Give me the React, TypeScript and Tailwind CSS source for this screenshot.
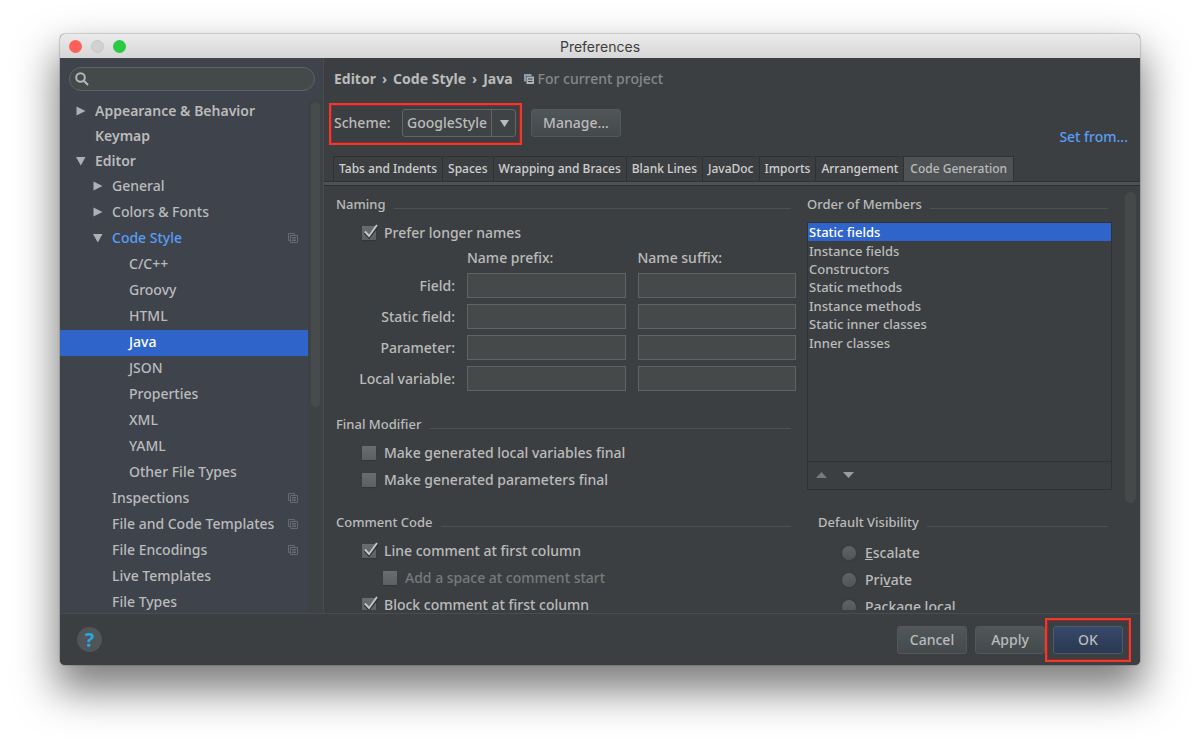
import React from 'react';

type TreeItem = {
  label: string;
  level: 0 | 1 | 2;
  arrow?: 'open' | 'closed';
  project?: boolean;
  link?: boolean;
  selected?: boolean;
};

const tree: TreeItem[] = [
  { label: 'Appearance & Behavior', level: 0, arrow: 'closed' },
  { label: 'Keymap', level: 0 },
  { label: 'Editor', level: 0, arrow: 'open' },
  { label: 'General', level: 1, arrow: 'closed' },
  { label: 'Colors & Fonts', level: 1, arrow: 'closed' },
  { label: 'Code Style', level: 1, arrow: 'open', project: true, link: true },
  { label: 'C/C++', level: 2 },
  { label: 'Groovy', level: 2 },
  { label: 'HTML', level: 2 },
  { label: 'Java', level: 2, selected: true },
  { label: 'JSON', level: 2 },
  { label: 'Properties', level: 2 },
  { label: 'XML', level: 2 },
  { label: 'YAML', level: 2 },
  { label: 'Other File Types', level: 2 },
  { label: 'Inspections', level: 1, project: true },
  { label: 'File and Code Templates', level: 1, project: true },
  { label: 'File Encodings', level: 1, project: true },
  { label: 'Live Templates', level: 1 },
  { label: 'File Types', level: 1 },
];

const levelClass = {
  0: 'h-[25px] pl-4 font-semibold',
  1: 'h-[26px] pl-[33px]',
  2: 'h-[26px] pl-[50px]',
};

const tabs = [
  'Tabs and Indents',
  'Spaces',
  'Wrapping and Braces',
  'Blank Lines',
  'JavaDoc',
  'Imports',
  'Arrangement',
  'Code Generation',
];

const members = [
  'Static fields',
  'Instance fields',
  'Constructors',
  'Static methods',
  'Instance methods',
  'Static inner classes',
  'Inner classes',
];

const nameFields = ['Field', 'Static field', 'Parameter', 'Local variable'];

const TreeArrow: React.FC<{ state?: 'open' | 'closed' }> = ({ state }) => (
  <span className="w-[19px] shrink-0">
    {state && (
      <svg width="10" height="10" viewBox="0 0 10 10" fill="#adb0b5">
        {state === 'open' ? <path d="M0 1h9.5L4.8 9.5z" /> : <path d="M.5 .5v9L9.500 5z" />}
      </svg>
    )}
  </span>
);

const ProjectIcon: React.FC = () => (
  <svg width="10" height="10" viewBox="0 0 10 10" fill="none" stroke="#656a73" className="mr-[10px]">
    <path d="M2 7.5H.5v-7h6V2" />
    <path d="M2.500 2.500h7v7h-7zM4 4.500h4M4 6h4M4 7.500h4" />
  </svg>
);

const SectionTitle: React.FC<{ children: React.ReactNode }> = ({ children }) => (
  <h2 className="flex items-center gap-2 h-5 text-[13px]">
    {children}
    <span className="flex-1 h-px mt-2 bg-[#4d5052]"></span>
  </h2>
);

type CheckProps = { id: string; label: string; checked?: boolean; disabled?: boolean; className?: string };

const Check: React.FC<CheckProps> = ({ id, label, checked, disabled, className = '' }) => (
  <div className={`flex items-center gap-2 h-[27px] ${className}`}>
    <span className="relative flex w-[14px] h-[14px]">
      <input
        type="checkbox"
        id={id}
        defaultChecked={checked}
        disabled={disabled}
        className="peer appearance-none w-[14px] h-[14px] bg-linear-to-b from-[#6a6d6e] to-[#5d6061] shadow-[0_1px_1px_#333537]"
      />
      <svg
        className="hidden peer-checked:block absolute left-0 -top-[2px] pointer-events-none"
        width="17"
        height="16"
        viewBox="0 0 17 16"
        fill="none"
      >
        <path d="M3 8.5l4 4.5L15.500 2" stroke="#2e3133" strokeWidth="3" />
        <path d="M3 7.500l4 4.500L15 1" stroke="#c4c6c7" strokeWidth="2" />
      </svg>
    </span>
    <label htmlFor={id} className={disabled ? 'text-[#777a7c]' : ''}>{label}</label>
  </div>
);

const Radio: React.FC<{ id: string; children: React.ReactNode }> = ({ id, children }) => (
  <div className="flex items-center gap-[9px] h-[27px]">
    <input
      type="radio"
      name="visibility"
      id={id}
      className="appearance-none w-[14px] h-[14px] rounded-full bg-linear-to-b from-[#5e6364] to-[#515556] shadow-[0_0_1px_1px_#383a3c]"
    />
    <label htmlFor={id}>{children}</label>
  </div>
);

const buttonClass =
  'h-7 w-[70px] rounded-[3px] border border-[#54585a] bg-linear-to-b from-[#515658] to-[#44494b]';

const Highlight: React.FC<{ className: string }> = ({ className }) => (
  <span className={`absolute border-2 border-[#f4372d] shadow-[inset_0_0_0_1px_#8c2c29] pointer-events-none ${className}`}></span>
);

const Sidebar: React.FC = () => (
  <aside className="flex flex-col w-[263px] shrink-0 bg-[#3e434c] pt-[9px]">
    <div className="relative ml-[9px] mr-2 mb-2">
      <input
        type="search"
        aria-label="Search settings"
        className="block w-full h-6 rounded-full border border-[#5f6365] bg-[#45494a] pl-7 outline-none"
      />
      <svg className="absolute left-[6px] top-[5px]" width="14" height="14" viewBox="0 0 14 14" fill="none" stroke="#b4b7b9" strokeWidth="2">
        <circle cx="5.500" cy="5.500" r="4.300" />
        <path d="M8.800 8.800L13 13" />
      </svg>
    </div>
    <div className="flex flex-1 min-h-0">
      <ul className="flex-1 overflow-hidden">
        {tree.map((item) => (
          <li key={item.label}>
            <button
              type="button"
              className={`flex items-center w-full pb-[2px] text-left whitespace-nowrap ${levelClass[item.level]} ${
                item.selected ? 'bg-[#2f65ca] text-white' : ''
              } ${item.link ? 'text-[#589df6]' : ''}`}
            >
              <TreeArrow state={item.arrow} />
              <span className="flex-1">{item.label}</span>
              {item.project && <ProjectIcon />}
            </button>
          </li>
        ))}
      </ul>
      <div className="w-[15px] bg-[#3e4244] px-[3px] pt-[3px]">
        <div className="h-[305px] rounded-full bg-[#484b4c]"></div>
      </div>
    </div>
  </aside>
);

const Naming: React.FC = () => (
  <section>
    <SectionTitle>Naming</SectionTitle>
    <Check id="longer" label="Prefer longer names" checked className="mt-[5px] ml-[26px]" />
    <div className="grid grid-cols-[119px_1fr_1fr] gap-x-3 gap-y-[6px] items-center mt-[3px] -mr-[5px]">
      <span></span>
      <span className="leading-[18px]">Name prefix:</span>
      <span className="leading-[18px]">Name suffix:</span>
      {nameFields.map((name) => (
        <React.Fragment key={name}>
          <label htmlFor={`${name}-prefix`} className="text-right whitespace-nowrap">{name}:</label>
          <input
            type="text"
            id={`${name}-prefix`}
            className="w-full h-[25px] px-1 border border-[#606364] bg-[#45494a] outline-none"
          />
          <input
            type="text"
            aria-label={`${name} suffix`}
            className="w-full h-[25px] px-1 border border-[#606364] bg-[#45494a] outline-none"
          />
        </React.Fragment>
      ))}
    </div>
  </section>
);

const MemberOrder: React.FC = () => (
  <section>
    <SectionTitle>Order of Members</SectionTitle>
    <div className="mt-2 -mr-1 border border-[#303234] text-[13px] leading-[18px]">
      <div className="h-[238px]">
        <ul className="grid grid-rows-7 h-[129px]">
          {members.map((member, i) => (
            <li key={member} className="grid">
              <button
                type="button"
                className={`flex items-center px-px text-left ${i === 0 ? 'bg-[#2f65ca] text-white' : ''}`}
              >
                {member}
              </button>
            </li>
          ))}
        </ul>
      </div>
      <div className="flex items-center gap-4 h-7 px-2 pb-[2px] border-t border-[#303234]">
        <button type="button" aria-label="Move up">
          <svg width="11" height="6" viewBox="0 0 11 6" fill="#77797b"><path d="M0 6h11L5.500 0z" /></svg>
        </button>
        <button type="button" aria-label="Move down">
          <svg width="11" height="6" viewBox="0 0 11 6" fill="#9a9c9e"><path d="M0 0h11L5.500 6z" /></svg>
        </button>
      </div>
    </div>
  </section>
);

const App: React.FC = () => {
  return (
    <div className="flex h-screen px-[60px] pt-[34px] pb-[87px] bg-white overflow-hidden">
      <div className="flex flex-col flex-1 min-w-0 rounded-[5px] overflow-hidden bg-[#3c3f41] text-[#bbbbbb] text-[14px] leading-5 font-medium font-['Noto_Sans',sans-serif] shadow-[0_22px_40px_4px_rgba(0,0,0,0.5),0_0_1px_1px_rgba(0,0,0,0.15)]">
        <header className="relative flex items-center justify-center h-6 shrink-0 bg-linear-to-b from-[#ebebeb] to-[#d6d6d6] text-[#3e3e3e]">
          <div className="absolute left-[9px] flex gap-[9px]">
            <button type="button" aria-label="Close" className="w-[13px] h-[13px] rounded-full bg-[#ff6158]"></button>
            <button type="button" aria-label="Minimize" className="w-[13px] h-[13px] rounded-full border border-[#c6c7c5] bg-[#d1d2d0]"></button>
            <button type="button" aria-label="Zoom" className="w-[13px] h-[13px] rounded-full bg-[#2bca42]"></button>
          </div>
          <h1 className="pt-px font-['Inter',sans-serif] font-normal">Preferences</h1>
        </header>

        <div className="flex flex-1 min-h-0">
          <Sidebar />

          <main className="flex flex-col flex-1 min-w-0 border-l border-[#484b4d]">
            <div className="flex items-center gap-[11px] mt-[11px] pl-[10px]">
              <h2 className="flex gap-[6px] font-bold">
                <span>Editor</span>
                <span>›</span>
                <span>Code Style</span>
                <span>›</span>
                <span>Java</span>
              </h2>
              <p className="flex items-center gap-1 text-[#86888a]">
                <svg width="10" height="10" viewBox="0 0 10 10" fill="none">
                  <path d="M0 0h7.500v2H2v5.500H0z" fill="#7fa3b5" />
                  <path d="M2.500 2.500H10V10H2.500z" fill="#b0b3b5" />
                  <path d="M4 5h4.500M4 7.500h4.500" stroke="#3c3f41" />
                </svg>
                For current project
              </p>
            </div>

            <div className="flex items-start pl-[10px] pr-3 mt-5">
              <div className="relative flex items-center">
                <label htmlFor="scheme" className="w-[68px]">Scheme:</label>
                <div className="relative flex">
                  <select
                    id="scheme"
                    className="appearance-none w-[114px] h-7 pl-1 rounded-[3px] border border-[#616566] bg-[#3f4345] outline-none"
                  >
                    <option>GoogleStyle</option>
                  </select>
                  <span className="absolute right-0 inset-y-0 flex items-center justify-center w-[25px] border-l border-[#616566] pointer-events-none">
                    <svg width="9" height="7" viewBox="0 0 9 7" fill="#bbbbbb"><path d="M0 0h9L4.500 7z" /></svg>
                  </span>
                </div>
                <Highlight className="-top-[6px] -bottom-2 -left-[5px] -right-[6px]" />
              </div>
              <button type="button" className="h-7 w-[90px] ml-[15px] rounded-[3px] border border-[#54585a] bg-linear-to-b from-[#515658] to-[#44494b]">
                Manage...
              </button>
              <a href="#" className="ml-auto mt-[18px] text-[#589df6]">Set from...</a>
            </div>

            <div className="mt-[9px] border-b border-[#2c2e30]">
              <div role="tablist" className="flex ml-[9px] w-fit border-l border-[#2f3133] text-[12px]">
                {tabs.map((tab) => {
                  const active = tab === 'Code Generation';
                  return (
                    <button
                      key={tab}
                      type="button"
                      role="tab"
                      aria-selected={active}
                      className={`h-[25px] border-t border-r border-[#2f3133] whitespace-nowrap ${
                        active ? 'px-[6px] bg-[#4e5254]' : 'px-[5px] text-[#d0d0d0]'
                      }`}
                    >
                      {tab}
                    </button>
                  );
                })}
              </div>
              <div className="h-1 border-t border-[#2f3133] bg-[#4e5254]"></div>
            </div>

            <div className="flex flex-1 min-h-0 pl-3 pr-1 pt-2 mb-[3px] overflow-hidden">
              <div className="flex gap-4 flex-1 min-w-0">
                <div className="w-[455px] shrink-0">
                  <Naming />
                  <section className="mt-[23px]">
                    <SectionTitle>Final Modifier</SectionTitle>
                    <div className="mt-[5px] ml-[26px]">
                      <Check id="final-locals" label="Make generated local variables final" />
                      <Check id="final-params" label="Make generated parameters final" />
                    </div>
                  </section>
                  <section className="mt-[19px]">
                    <SectionTitle>Comment Code</SectionTitle>
                    <div className="mt-[5px] ml-[26px]">
                      <Check id="line-comment" label="Line comment at first column" checked />
                      <Check id="add-space" label="Add a space at comment start" disabled className="ml-[21px]" />
                      <Check id="block-comment" label="Block comment at first column" checked />
                    </div>
                  </section>
                </div>
                <div className="flex-1 min-w-0 mr-[17px]">
                  <MemberOrder />
                  <section className="mt-[22px] ml-[11px]">
                    <SectionTitle>Default Visibility</SectionTitle>
                    <div className="mt-[7px] ml-6">
                      <Radio id="escalate"><u>E</u>scalate</Radio>
                      <Radio id="private">Pri<u>v</u>ate</Radio>
                      <Radio id="package">Package local</Radio>
                    </div>
                  </section>
                </div>
              </div>
              <div className="w-[11px] h-[311px] -mt-[2px] rounded-full bg-[#464949]"></div>
            </div>
          </main>
        </div>

        <footer className="flex items-center h-[52px] shrink-0 px-[17px] gap-2 border-t border-[#4a4d4f] bg-[#3c3f41]">
          <button type="button" aria-label="Help" className="flex items-center justify-center w-[25px] h-[25px] mr-auto rounded-full bg-[#505557] text-[#27a5dd] text-xl font-bold leading-none">
            ?
          </button>
          <button type="button" className={buttonClass}>Cancel</button>
          <button type="button" className={buttonClass}>Apply</button>
          <div className="relative flex">
            <button type="button" className="h-7 w-[70px] rounded-[3px] border border-[#4c5a70] bg-linear-to-b from-[#37486a] to-[#2b3950]">
              OK
            </button>
            <Highlight className="-inset-2" />
          </div>
        </footer>
      </div>
    </div>
  );
};

export default App;
